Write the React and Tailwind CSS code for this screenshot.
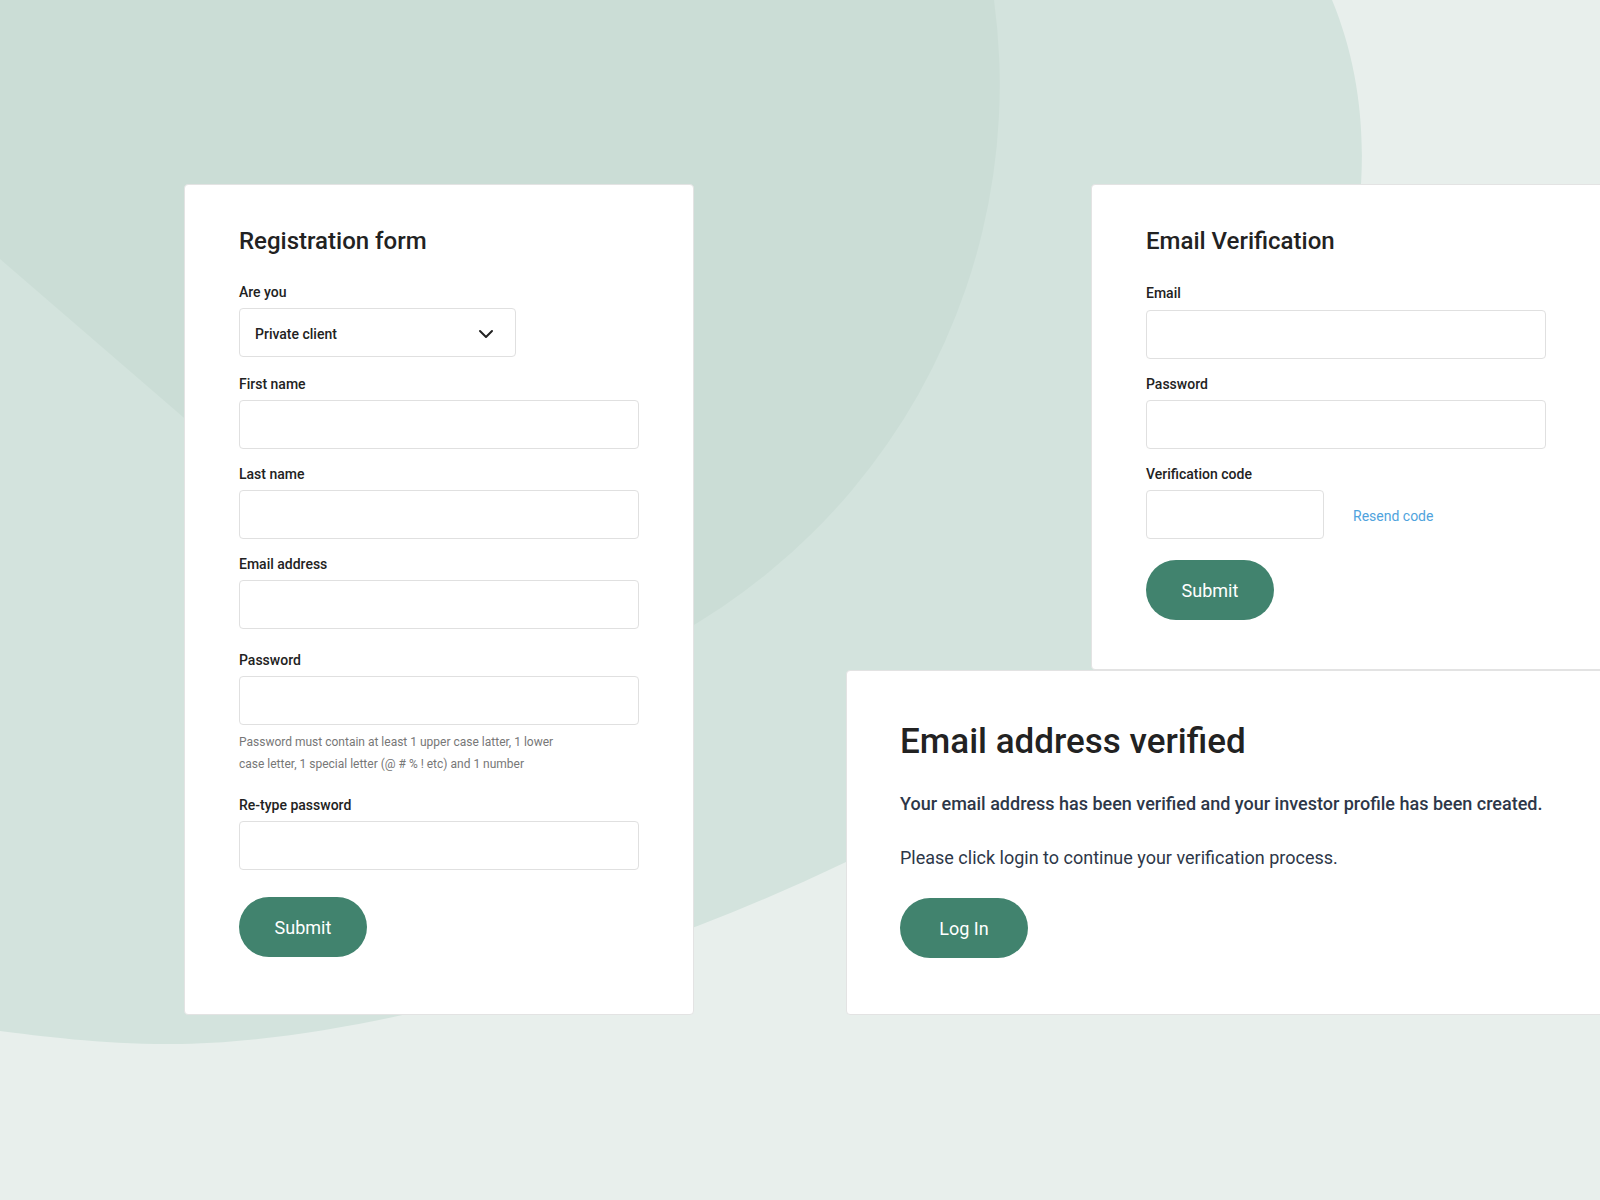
import React from "react";
import { ChevronDown } from "lucide-react";

function Label({ children, className = "" }) {
  return (
    <div className={`text-[14px] leading-[20px] font-medium text-[#222222] ${className}`}>
      {children}
    </div>
  );
}

function Input({ className = "" }) {
  return (
    <div className={`h-[49px] rounded-[4px] border border-[#e0e0e0] bg-white ${className}`} />
  );
}

function Button({ children, className = "" }) {
  return (
    <button
      className={`w-[128px] h-[60px] rounded-full bg-[#41836e] text-white text-[18px] font-normal flex items-center justify-center ${className}`}
    >
      {children}
    </button>
  );
}

function Background() {
  return (
    <svg
      className="absolute inset-0"
      width="1600"
      height="1200"
      viewBox="0 0 1600 1200"
    >
      <rect x="0" y="0" width="1600" height="1200" fill="#e8efec" />
      <path
        d="M0 0 L1332 0 C1440 260 1250 640 846 862 C600 980 330 1045 168 1044 C100 1044 40 1036 0 1031 Z"
        fill="#d3e3dd"
      />
      <path
        d="M0 0 L994 0 A630 630 0 0 1 509.6 699 L0 259 Z"
        fill="#cbddd6"
      />
    </svg>
  );
}

export default function App() {
  return (
    <div className="relative w-[1600px] h-[1200px] overflow-hidden bg-[#e8efec] font-['Roboto',sans-serif]">
      <Background />
      <div className="relative flex pt-[184px] pl-[184px]">
        {/* Registration form */}
        <div className="w-[510px] h-[831px] shrink-0 bg-white border border-[#e3e3e3] rounded-[4px] pl-[54px] pt-[40px]">
          <h2 className="text-[24px] leading-[32px] text-[#222222] font-medium">
            Registration form
          </h2>
          <Label className="mt-[25px]">Are you</Label>
          <div className="mt-[6px] w-[277px] h-[49px] rounded-[4px] border border-[#e0e0e0] bg-white flex items-center justify-between pl-[15px] pr-[17px] pt-[3px]">
            <span className="text-[14px] text-[#222222] font-medium">Private client</span>
            <ChevronDown size={24} strokeWidth={2} className="text-[#222222]" />
          </div>

          <Label className="mt-[17px]">First name</Label>
          <Input className="mt-[6px] w-[400px]" />

          <Label className="mt-[15px]">Last name</Label>
          <Input className="mt-[6px] w-[400px]" />

          <Label className="mt-[15px]">Email address</Label>
          <Input className="mt-[6px] w-[400px]" />

          <Label className="mt-[21px]">Password</Label>
          <Input className="mt-[6px] w-[400px]" />
          <p className="mt-[6px] text-[12px] leading-[22px] text-[#777777]">
            Password must contain at least 1 upper case latter, 1 lower
            <br />
            case letter, 1 special letter (@ # % ! etc) and 1 number
          </p>

          <Label className="mt-[20px]">Re-type password</Label>
          <Input className="mt-[6px] w-[400px]" />

          <Button className="mt-[27px]">Submit</Button>
        </div>

        {/* Right column */}
        <div className="ml-[152px] w-[780px] shrink-0 flex flex-col">
          <div className="ml-[245px] h-[486px] bg-white border border-[#e3e3e3] rounded-[4px] pl-[54px] pt-[40px]">
            <h2 className="text-[24px] leading-[32px] text-[#222222] font-medium">
              Email Verification
            </h2>
            <Label className="mt-[26px]">Email</Label>
            <Input className="mt-[7px] w-[400px]" />

            <Label className="mt-[15px]">Password</Label>
            <Input className="mt-[6px] w-[400px]" />

            <Label className="mt-[15px]">Verification code</Label>
            <div className="mt-[6px] flex items-center">
              <Input className="w-[178px]" />
              <span className="ml-[29px] mt-[3px] text-[14px] text-[#4fa3dd]">Resend code</span>
            </div>

            <Button className="mt-[21px]">Submit</Button>
          </div>

          <div className="h-[345px] bg-white border border-[#e3e3e3] rounded-[4px] pl-[53px] pt-[51px]">
            <h1 className="text-[35px] leading-[40px] text-[#222222] font-medium">
              Email address verified
            </h1>
            <p className="mt-[28px] text-[18px] leading-[28px] font-medium text-[#2d3748]">
              Your email address has been verified and your investor profile has been created.
            </p>
            <p className="mt-[26px] text-[18px] leading-[28px] text-[#2d3748]">
              Please click login to continue your verification process.
            </p>
            <Button className="mt-[26px]">Log In</Button>
          </div>
        </div>
      </div>
    </div>
  );
}
